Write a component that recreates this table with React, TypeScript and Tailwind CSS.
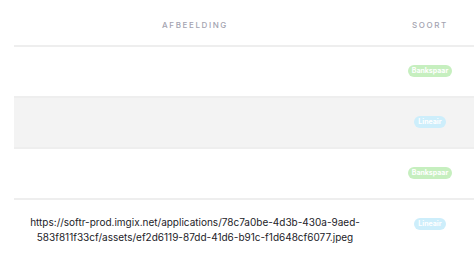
const rows = [
  { image: "", kind: "Bankspaar" },
  { image: "", kind: "Lineair" },
  { image: "", kind: "Bankspaar" },
  {
    image:
      "https://softr-prod.imgix.net/applications/78c7a0be-4d3b-430a-9aed-583f811f33cf/assets/ef2d6119-87dd-41d6-b91c-f1d648cf6077.jpeg",
    kind: "Lineair",
  },
]

function Badge({ kind }: { kind: string }) {
  const color = kind === "Lineair" ? "bg-[#cdeefb]" : "bg-[#c6efbf]"
  return (
    <span className={`inline-block rounded-full px-[4px] py-[1px] align-middle text-[7px] font-bold leading-[10px] text-white ${color}`}>
      {kind}
    </span>
  )
}

export default function App() {
  return (
    <div className="h-[280px] w-[474px] overflow-hidden bg-white" style={{ fontFamily: "Inter, 'Liberation Sans', sans-serif" }}>
      <div className="ml-[14px] w-[470px]">
        <div className="flex h-[47px] items-center border-b-2 border-[#eeeeee] pt-[5px] text-[8px] font-medium tracking-[0.2em] text-[#a3a3b0]">
          <div className="w-[362px] text-center">AFBEELDING</div>
          <div className="w-[108px] text-center">SOORT</div>
        </div>
        {rows.map((r, i) => (
          <div
            key={i}
            className={`flex items-start pt-[15px] ${i < 3 ? "h-[51px] border-b-2 border-[#eeeeee]" : "h-[60px]"} ${i === 1 ? "bg-[#f3f3f3]" : ""}`}
          >
            <div className="w-[362px] px-2 text-center text-[10px] leading-[15px] text-[#222228]">
              {r.image}
            </div>
            <div className="w-[108px] text-center leading-[15px]">
              <Badge kind={r.kind} />
            </div>
          </div>
        ))}
      </div>
    </div>
  )
}
